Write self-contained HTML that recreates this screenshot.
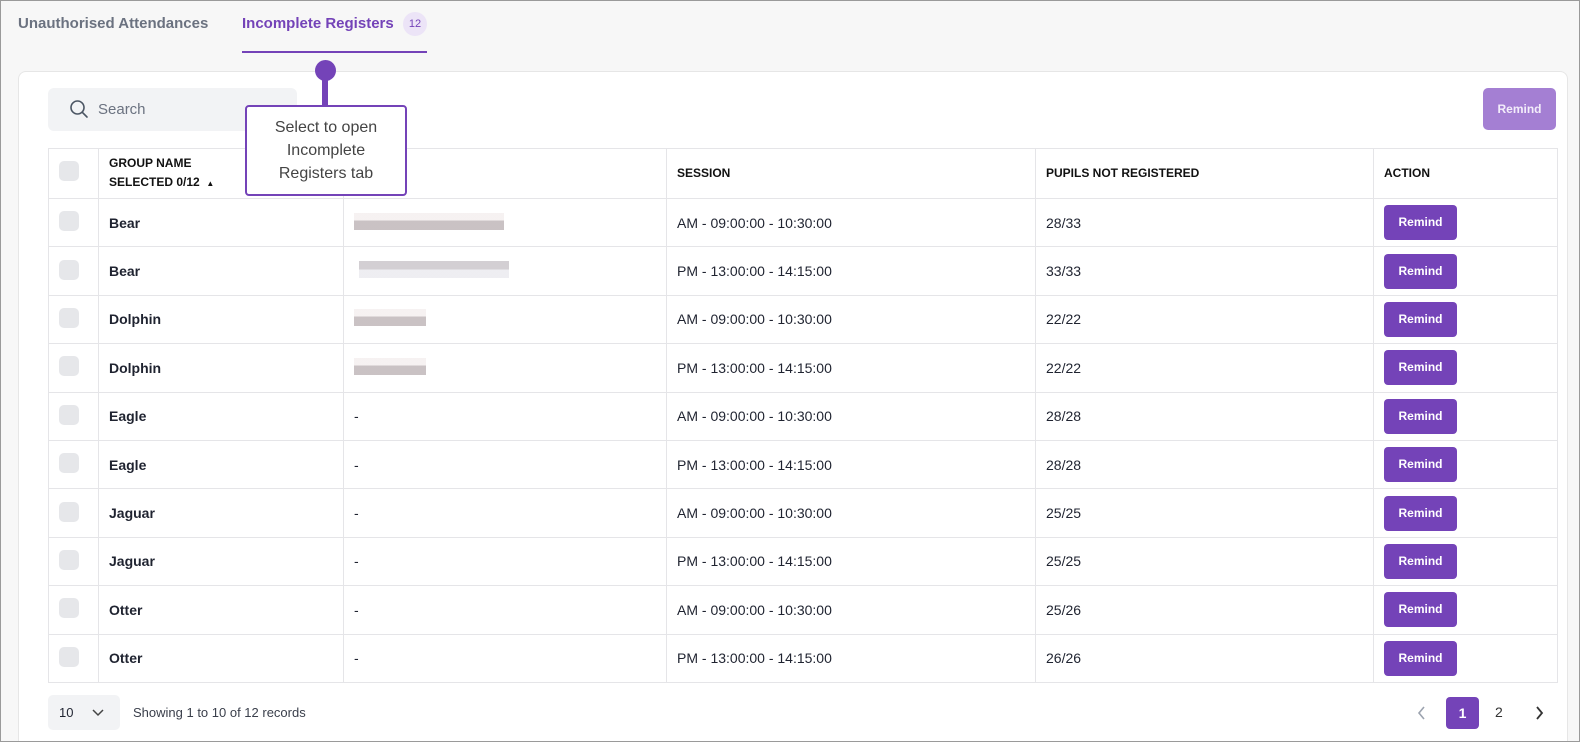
<!DOCTYPE html>
<html><head><meta charset="utf-8"><style>
*{box-sizing:border-box;margin:0;padding:0}
html,body{width:1580px;height:742px;overflow:hidden}
body{background:#f7f7f7;font-family:"Liberation Sans",Arial,sans-serif;color:#1f2330;position:relative}
.frame{position:absolute;left:0;top:0;width:1580px;height:742px;border:1px solid #9a9a9a;z-index:10;pointer-events:none}
.tab1{position:absolute;left:18px;top:15px;font-size:15px;font-weight:bold;color:#6b7280}
.tab2{position:absolute;left:242px;top:15px;font-size:15px;font-weight:bold;color:#7443b8}
.badge{position:absolute;left:403px;top:12px;width:24px;height:24px;border-radius:12px;background:#ece4f7;color:#7443b8;font-size:11px;text-align:center;line-height:24px}
.uline{position:absolute;left:242px;top:51px;width:185px;height:2px;background:#7443b8}
.card{position:absolute;left:18px;top:71px;width:1550px;height:671px;background:#fff;border:1px solid #e6e6e6;border-bottom:none;border-radius:8px 8px 0 0}
.search{position:absolute;left:48px;top:88px;width:249px;height:43px;background:#f2f3f5;border-radius:6px}
.search span{position:absolute;left:50px;top:13px;font-size:15px;color:#6b7280}
.rbtn{position:absolute;left:1483px;top:88px;width:73px;height:42px;background:#a47fd3;border-radius:5px;color:#f3eefa;font-size:12px;font-weight:bold;text-align:center;line-height:42px}
table{position:absolute;left:48px;top:148px;border-collapse:collapse;width:1509px;table-layout:fixed}
td,th{border:1px solid #e5e5e8;font-size:14px;text-align:left;padding:0 0 0 10px;vertical-align:middle}
th{height:50px;font-size:12px;font-weight:bold;color:#111;line-height:19px}
td{height:48.4px}
td.n{font-weight:bold}
.cb{display:inline-block;width:20px;height:20px;border-radius:5px;background:#e6e7ea;margin-left:0}
.btn{display:inline-block;width:73px;height:35px;border-radius:4px;background:#7443b8;color:#fff;font-size:12px;font-weight:bold;text-align:center;line-height:35px}
.blur{display:inline-block;height:17px;background:linear-gradient(to bottom,#f4eeee 0 45%,#bcb3b5 45%);opacity:.8}
.tip{position:absolute;left:245px;top:105px;width:162px;height:91px;background:#fff;border:2px solid #7443b8;border-radius:4px;text-align:center;font-size:16px;color:#444;line-height:23px;padding-top:9px}
.stem{position:absolute;left:322px;top:70px;width:6px;height:36px;background:#7443b8}
.dot{position:absolute;left:315px;top:60px;width:21px;height:21px;border-radius:50%;background:#7443b8}
.sel{position:absolute;left:48px;top:695px;width:72px;height:35px;background:#f2f3f5;border-radius:5px;font-size:13px}
.foot{position:absolute;left:133px;top:705px;font-size:13px;color:#3a3f4b}
.p1{position:absolute;left:1446px;top:697px;width:33px;height:32px;background:#7443b8;border-radius:4px;color:#fff;font-size:14px;font-weight:bold;text-align:center;line-height:32px}
.p2{position:absolute;left:1495px;top:704px;font-size:14px;color:#333}
</style></head><body>
<div class="frame"></div>
<div class="tab1">Unauthorised Attendances</div>
<div class="tab2">Incomplete Registers</div>
<div class="badge">12</div>
<div class="uline"></div>
<div class="card"></div>
<div class="search"><svg style="position:absolute;left:21px;top:11px" width="20" height="20" viewBox="0 0 20 20"><circle cx="8.5" cy="8.5" r="6.5" fill="none" stroke="#4b5563" stroke-width="1.6"/><path d="M13.3 13.3L18 18" stroke="#4b5563" stroke-width="1.6" stroke-linecap="round"/></svg><span>Search</span></div>
<div class="rbtn">Remind</div>
<table>
<colgroup><col style="width:50px"><col style="width:245px"><col style="width:323px"><col style="width:369px"><col style="width:338px"><col style="width:184px"></colgroup>
<tr><th><span class="cb"></span></th><th>GROUP NAME<br>SELECTED 0/12 &nbsp;<span style="font-size:8px">&#9650;</span></th><th></th><th>SESSION</th><th>PUPILS NOT REGISTERED</th><th>ACTION</th></tr>
<tr><td><span class="cb"></span></td><td class="n">Bear</td><td><span class="blur" style="width:150px"></span></td><td>AM - 09:00:00 - 10:30:00</td><td>28/33</td><td><span class="btn">Remind</span></td></tr>
<tr><td><span class="cb"></span></td><td class="n">Bear</td><td><span class="blur" style="width:150px;margin-left:5px;background:linear-gradient(to bottom,#c8c3c8 0 50%,#eae9ee 50%)"></span></td><td>PM - 13:00:00 - 14:15:00</td><td>33/33</td><td><span class="btn">Remind</span></td></tr>
<tr><td><span class="cb"></span></td><td class="n">Dolphin</td><td><span class="blur" style="width:72px"></span></td><td>AM - 09:00:00 - 10:30:00</td><td>22/22</td><td><span class="btn">Remind</span></td></tr>
<tr><td><span class="cb"></span></td><td class="n">Dolphin</td><td><span class="blur" style="width:72px"></span></td><td>PM - 13:00:00 - 14:15:00</td><td>22/22</td><td><span class="btn">Remind</span></td></tr>
<tr><td><span class="cb"></span></td><td class="n">Eagle</td><td>-</td><td>AM - 09:00:00 - 10:30:00</td><td>28/28</td><td><span class="btn">Remind</span></td></tr>
<tr><td><span class="cb"></span></td><td class="n">Eagle</td><td>-</td><td>PM - 13:00:00 - 14:15:00</td><td>28/28</td><td><span class="btn">Remind</span></td></tr>
<tr><td><span class="cb"></span></td><td class="n">Jaguar</td><td>-</td><td>AM - 09:00:00 - 10:30:00</td><td>25/25</td><td><span class="btn">Remind</span></td></tr>
<tr><td><span class="cb"></span></td><td class="n">Jaguar</td><td>-</td><td>PM - 13:00:00 - 14:15:00</td><td>25/25</td><td><span class="btn">Remind</span></td></tr>
<tr><td><span class="cb"></span></td><td class="n">Otter</td><td>-</td><td>AM - 09:00:00 - 10:30:00</td><td>25/26</td><td><span class="btn">Remind</span></td></tr>
<tr><td><span class="cb"></span></td><td class="n">Otter</td><td>-</td><td>PM - 13:00:00 - 14:15:00</td><td>26/26</td><td><span class="btn">Remind</span></td></tr>
</table>
<div class="stem"></div><div class="dot"></div>
<div class="tip">Select to open<br>Incomplete<br>Registers tab</div>
<div class="sel"><span style="position:absolute;left:11px;top:10px">10</span><svg style="position:absolute;left:44px;top:13px" width="12" height="9" viewBox="0 0 12 9"><path d="M1 2l5 5 5-5" fill="none" stroke="#444" stroke-width="1.5"/></svg></div>
<div class="foot">Showing 1 to 10 of 12 records</div>
<svg style="position:absolute;left:1417px;top:706px" width="10" height="14" viewBox="0 0 10 14"><path d="M7 1L2 7l5 6" fill="none" stroke="#9ca3af" stroke-width="1.6"/></svg>
<div class="p1">1</div>
<div class="p2">2</div>
<svg style="position:absolute;left:1534px;top:706px" width="10" height="14" viewBox="0 0 10 14"><path d="M3 1l5 6-5 6" fill="none" stroke="#333" stroke-width="1.8"/></svg>
</body></html>
